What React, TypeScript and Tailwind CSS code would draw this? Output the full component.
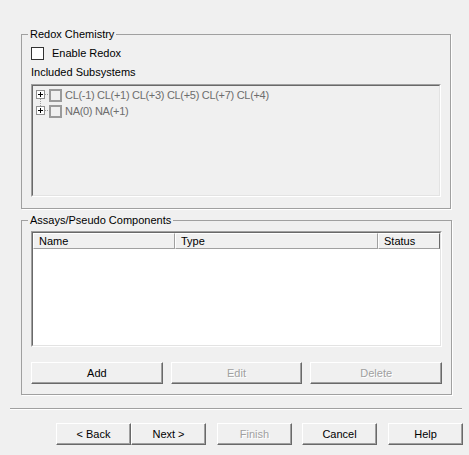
import type { ReactNode } from 'react'

function Btn({ children, disabled, className = '' }: { children: ReactNode; disabled?: boolean; className?: string }) {
  return (
    <button
      className={`h-[22px] border border-t-white border-l-white border-r-[#696969] border-b-[#696969] bg-[#f0f0f0] shadow-[inset_-1px_-1px_0_#a0a0a0] text-[11px] leading-[13px] ${
        disabled ? 'text-[#a0a0a0] [text-shadow:1px_1px_0_#fff]' : 'text-black'
      } ${className}`}
    >
      {children}
    </button>
  )
}

function TreeGlyph({ first }: { first?: boolean }) {
  return (
    <svg width="13" height="16" viewBox="0 0 13 16" className="shrink-0">
      <rect x="0.5" y="3.5" width="8" height="8" fill="#fff" stroke="#919191" />
      <path d="M2 7.5h5M4.5 5v5" stroke="#000" strokeWidth="1" />
      <path d="M9 7.5h4" stroke="#a0a0a0" strokeDasharray="1 1" />
      {first ? (
        <path d="M4.5 12v4" stroke="#a0a0a0" strokeDasharray="1 1" />
      ) : (
        <path d="M4.5 0v3" stroke="#a0a0a0" strokeDasharray="1 1" />
      )}
    </svg>
  )
}

function TreeRow({ label, first }: { label: string; first?: boolean }) {
  return (
    <div className="flex h-[16px] items-center">
      <TreeGlyph first={first} />
      <span className="h-[13px] w-[13px] shrink-0 border-2 border-[#9a9a9a] bg-[#f0f0f0]" />
      <span className="ml-[3px] text-[#6d6d6d] tracking-[-0.3px]">{label}</span>
    </div>
  )
}

export default function App() {
  return (
    <div className="h-[455px] w-[469px] overflow-hidden bg-[#f0f0f0] font-['Liberation_Sans',Arial,sans-serif] text-[11px] leading-[13px] text-black">
      <div className="pl-[21px] pr-[18px] pt-[28px]">
        {/* Redox Chemistry */}
        <fieldset className="border border-[#a0a0a0] pl-[9px] pr-[9px] pb-[11px] shadow-[1px_1px_0_#fff]">
          <legend className="-ml-[3px] px-[2px] leading-[13px]">Redox Chemistry</legend>
          <div className="mt-[6px] flex h-[13px] items-center">
            <span className="h-[13px] w-[13px] border border-[#333] bg-white" />
            <span className="ml-[8px]">Enable Redox</span>
          </div>
          <div className="mt-[6px] h-[13px]">Included Subsystems</div>
          <div className="mt-[5px] h-[113px] border border-t-[#a0a0a0] border-l-[#a0a0a0] border-r-white border-b-white">
            <div className="h-full border border-t-[#696969] border-l-[#696969] border-r-[#e3e3e3] border-b-[#e3e3e3] bg-[#f0f0f0] pl-[3px] pt-[1px]">
              <TreeRow first label="CL(-1) CL(+1) CL(+3) CL(+5) CL(+7) CL(+4)" />
              <TreeRow label="NA(0) NA(+1)" />
            </div>
          </div>
        </fieldset>

        {/* Assays/Pseudo Components */}
        <fieldset className="mt-[5px] border border-[#a0a0a0] pl-[9px] pr-[9px] pb-[10px] shadow-[1px_1px_0_#fff]">
          <legend className="-ml-[3px] px-[2px] leading-[13px]">Assays/Pseudo Components</legend>
          <div className="mt-[4px] h-[116px] border border-t-[#a0a0a0] border-l-[#a0a0a0] border-r-white border-b-white">
            <div className="flex h-full flex-col border border-t-[#696969] border-l-[#696969] border-r-[#e3e3e3] border-b-[#e3e3e3] bg-white">
              <div className="flex h-[16px] shrink-0">
                <div className="w-[142px] border border-t-white border-l-white border-r-[#a0a0a0] border-b-[#a0a0a0] bg-[#f0f0f0] pl-[5px] leading-[14px]">
                  Name
                </div>
                <div className="w-[203px] border border-t-white border-l-white border-r-[#a0a0a0] border-b-[#a0a0a0] bg-[#f0f0f0] pl-[5px] leading-[14px]">
                  Type
                </div>
                <div className="w-[62px] border border-t-white border-l-white border-r-[#696969] border-b-[#a0a0a0] bg-[#f0f0f0] pl-[5px] leading-[14px]">
                  Status
                </div>
              </div>
              <div className="flex-1" />
            </div>
          </div>
          <div className="mt-[15px] flex gap-[8px]">
            <Btn className="flex-1">Add</Btn>
            <Btn disabled className="flex-1">Edit</Btn>
            <Btn disabled className="flex-1">Delete</Btn>
          </div>
        </fieldset>
      </div>

      <div className="ml-[10px] mt-[13px] w-[452px] border-t border-b border-t-[#a0a0a0] border-b-white" />

      <div className="mt-[13px] flex pl-[56px]">
        <Btn className="w-[75px]">&lt; Back</Btn>
        <Btn className="w-[75px]">Next &gt;</Btn>
        <Btn disabled className="ml-[11px] w-[75px]">Finish</Btn>
        <Btn className="ml-[10px] w-[75px]">Cancel</Btn>
        <Btn className="ml-[11px] w-[75px]">Help</Btn>
      </div>
    </div>
  )
}
